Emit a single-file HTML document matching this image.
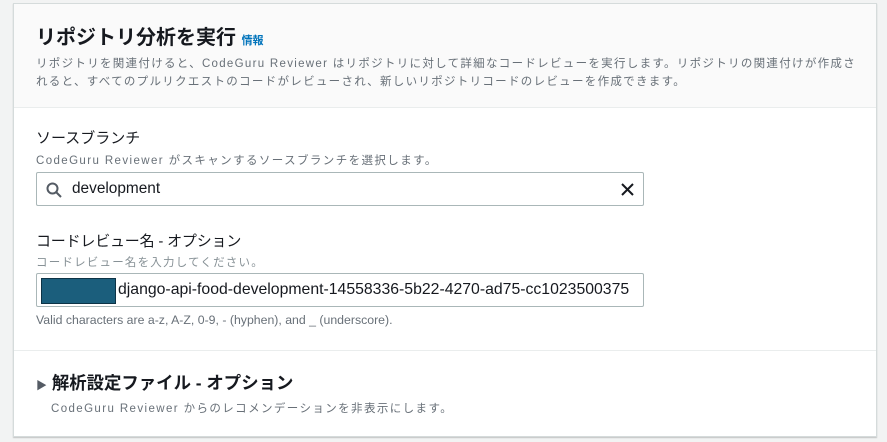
<!DOCTYPE html>
<html><head><meta charset="utf-8"><style>
body{margin:0;width:887px;height:442px;background:#f2f3f3;font-family:"Liberation Sans","Noto Sans CJK JP",sans-serif;overflow:hidden;position:relative}
.card{position:absolute;left:13px;top:3px;width:862px;height:432px;background:#fff;border:1px solid #d5dbdb;box-shadow:0 1px 1px rgba(0,0,0,.2)}
.hdr{position:absolute;left:0;top:0;width:862px;height:103px;background:#fafafa;border-bottom:1px solid #eaeded}
.t{position:absolute;white-space:nowrap}
.inp{position:absolute;left:22px;width:606px;height:32px;border:1px solid #aab7b8;border-radius:2px;background:#fff}
</style></head><body>
<div class="card">
<div class="hdr">
<div class="t" style="left:22px;top:17px;font-size:20px;font-weight:bold;color:#16191f">リポジトリ分析を実行 <span style="font-size:11px;color:#0073bb">情報</span></div>
<div class="t" style="left:22px;top:51px;font-size:11.5px;letter-spacing:1.3px;color:#687078;line-height:18px">リポジトリを関連付けると、CodeGuru Reviewer はリポジトリに対して詳細なコードレビューを実行します。リポジトリの関連付けが作成さ<br>れると、すべてのプルリクエストのコードがレビューされ、新しいリポジトリコードのレビューを作成できます。</div>
</div>
<div class="t" style="left:22px;top:123px;font-size:15px;color:#16191f">ソースブランチ</div>
<div class="t" style="left:22px;top:148px;font-size:11.5px;letter-spacing:1.4px;color:#687078">CodeGuru Reviewer がスキャンするソースブランチを選択します。</div>
<div class="inp" style="top:168px">
<svg style="position:absolute;left:9px;top:9px" width="16" height="16" viewBox="0 0 16 16"><circle cx="6.5" cy="6.5" r="5" fill="none" stroke="#545b64" stroke-width="2"/><path d="M10 10l5 5" stroke="#545b64" stroke-width="2"/></svg>
<div class="t" style="left:35px;top:7px;font-size:15.4px;color:#16191f">development</div>
<svg style="position:absolute;left:584px;top:10px" width="13" height="13" viewBox="0 0 13 13"><path d="M1 1l11 11M12 1L1 12" stroke="#16191f" stroke-width="2"/></svg>
</div>
<div class="t" style="left:22px;top:226px;font-size:15px;letter-spacing:-0.2px;color:#16191f">コードレビュー名 - オプション</div>
<div class="t" style="left:22px;top:250px;font-size:11.5px;letter-spacing:1.2px;color:#879196">コードレビュー名を入力してください。</div>
<div class="inp" style="top:269px">
<div style="position:absolute;left:4px;top:4px;width:75px;height:26px;background:#1b5e7c;border:1px solid #0d3346;box-sizing:border-box"></div>
<div class="t" style="left:81px;top:7px;font-size:15.8px;color:#16191f">django-api-food-development-14558336-5b22-4270-ad75-cc1023500375</div>
</div>
<div class="t" style="left:22px;top:309px;font-size:12.3px;color:#687078">Valid characters are a-z, A-Z, 0-9, - (hyphen), and _ (underscore).</div>
<div style="position:absolute;left:0;top:346px;width:862px;border-top:1px solid #eaeded"></div>
<div class="t" style="left:22px;top:366px;font-size:17.4px;font-weight:bold;color:#16191f"><span style="font-size:11px;color:#545b64">▶</span> 解析設定ファイル - オプション</div>
<div class="t" style="left:37px;top:396px;font-size:11.5px;letter-spacing:1.4px;color:#687078">CodeGuru Reviewer からのレコメンデーションを非表示にします。</div>
</div>
</body></html>
